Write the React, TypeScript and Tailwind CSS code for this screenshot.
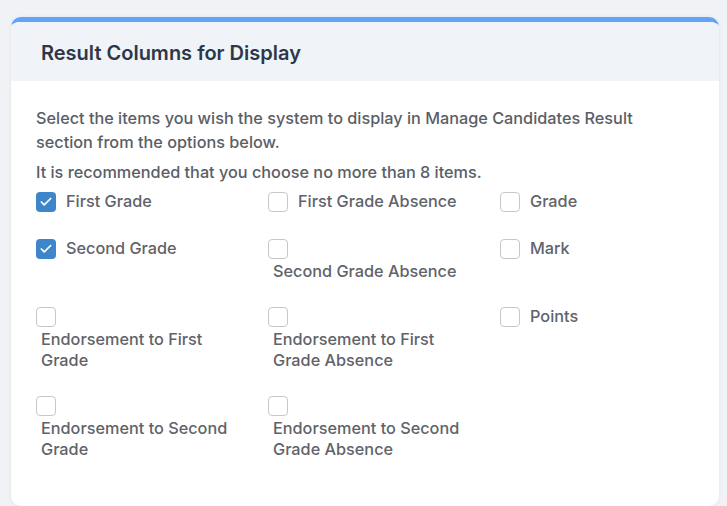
import { Check } from "lucide-react";

const items = [
  { label: "First Grade", checked: true },
  { label: "First Grade Absence", checked: false },
  { label: "Grade", checked: false },
  { label: "Second Grade", checked: true },
  { label: "Second Grade Absence", checked: false },
  { label: "Mark", checked: false },
  { label: "Endorsement to First Grade", checked: false },
  { label: "Endorsement to First Grade Absence", checked: false },
  { label: "Points", checked: false },
  { label: "Endorsement to Second Grade", checked: false },
  { label: "Endorsement to Second Grade Absence", checked: false },
];

function CheckItem({ label, checked }: { label: string; checked: boolean }) {
  return (
    <label className="flex flex-wrap items-start w-[205px]">
      <span
        className={
          checked
            ? "mr-[5px] mt-px mb-[2px] flex size-[20px] shrink-0 items-center justify-center rounded-[4px] bg-[#3d86c9]"
            : "mr-[5px] mt-px mb-[2px] flex size-[20px] shrink-0 items-center justify-center rounded-[4px] border border-[#c4c7cc] bg-white"
        }
      >
        {checked && <Check className="size-[14px] text-white" strokeWidth={3} />}
      </span>
      <span className="pl-[5px] text-[16.25px] font-medium leading-[21px] text-[#5f636a]">{label}</span>
    </label>
  );
}

export default function App() {
  return (
    <div className="min-h-[506px] bg-[#f0f2f6] pt-[17px] pl-[11px] pr-[8px] font-['Inter',sans-serif]">
      <div className="h-[489px] overflow-hidden rounded-[10px] border-t-[5px] border-[#60a5fa] bg-white shadow-[0_0_4px_rgba(0,0,0,0.06)]">
        <div className="flex h-[59px] items-center bg-[#f0f4f9] pl-[30px] pt-[2px]">
          <h2 className="text-[20px] font-semibold text-[#2d3748]">Result Columns for Display</h2>
        </div>
        <div className="px-[25px] pt-[25px]">
          <p className="max-w-[630px] text-[16.25px] font-medium leading-[24px] text-[#5a5e66]">
            Select the items you wish the system to display in Manage Candidates Result section from
            the options below.
          </p>
          <p className="mt-[6px] text-[16.25px] font-medium leading-[24px] text-[#5a5e66]">
            It is recommended that you choose no more than 8 items.
          </p>
          <div className="mt-[7px] grid grid-cols-[232px_232px_232px] gap-y-[24px]">
            {items.map((it) => (
              <CheckItem key={it.label} label={it.label} checked={it.checked} />
            ))}
          </div>
        </div>
      </div>
    </div>
  );
}
